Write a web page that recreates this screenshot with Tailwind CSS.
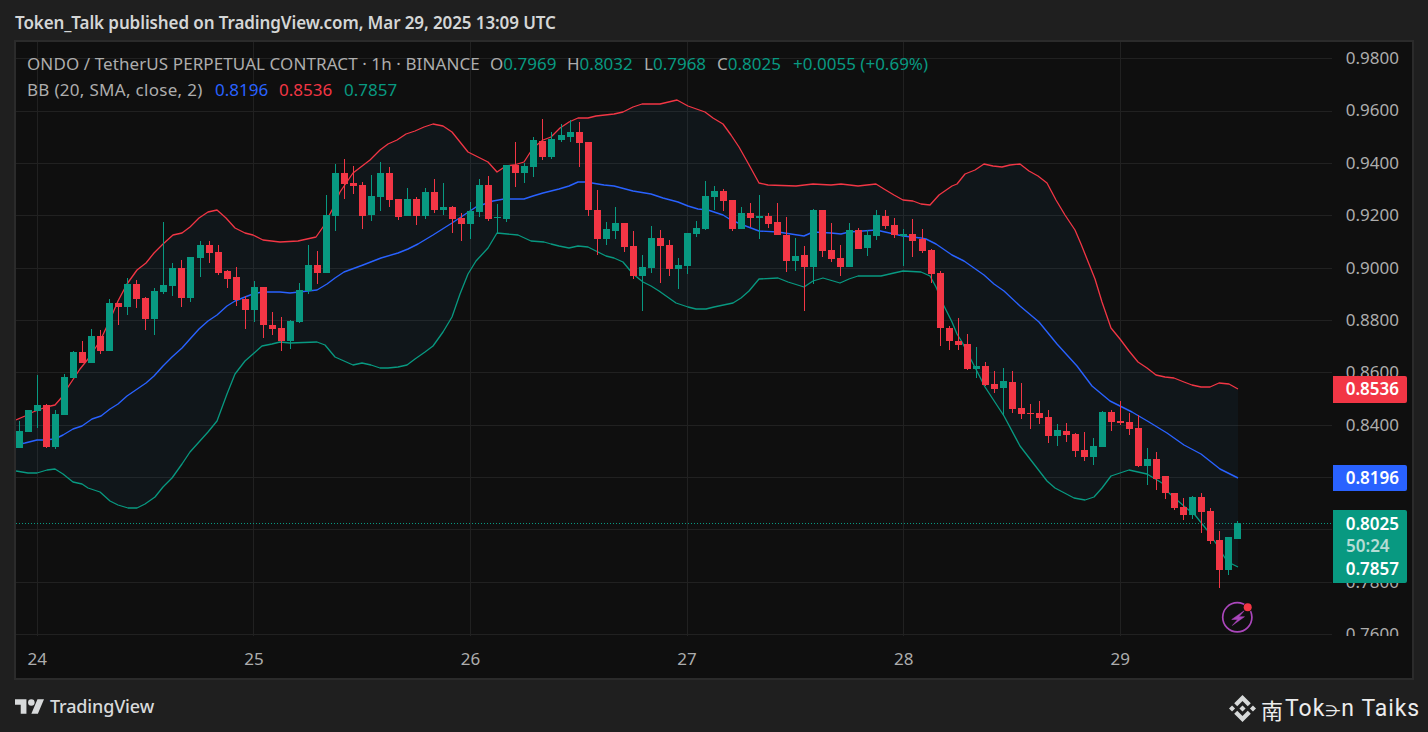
<!doctype html>
<html lang="en">
<head>
<meta charset="utf-8">
<title>ONDO / TetherUS chart</title>
<script src="https://cdn.jsdelivr.net/npm/@tailwindcss/browser@4"></script>
</head>
<body class="w-[1428px] h-[732px] overflow-hidden bg-[#1f1f1f] font-['Noto_Sans','DejaVu_Sans',sans-serif] text-[#adadad]">
  <header class="h-10 flex items-center pl-[15px] pt-[6px] text-[17px] font-semibold text-[#d4d6d6] tracking-[-0.1px]">Token_Talk published on TradingView.com, Mar 29, 2025 13:09 UTC</header>

  <main class="relative mx-[14px] w-[1400px] h-[640px] border-2 border-[#2b2b2b] bg-[#0f0f0f] flex flex-col">
    <div class="flex h-[594px]">
      <div class="relative w-[1316px] h-full">
        <svg id="chart" class="absolute inset-0" width="1316" height="594" viewBox="16 42 1316 594"></svg>
        <div class="absolute left-[11px] top-[9px] flex flex-col text-[17px] leading-[26px] whitespace-nowrap">
          <div class="flex">
            <span class="w-[463px] tracking-[0.09px]">ONDO / TetherUS PERPETUAL CONTRACT · 1h · BINANCE</span>
            <span class="w-[77px]">O<span class="text-[#089981]">0.7969</span></span>
            <span class="w-[77px]">H<span class="text-[#089981]">0.8032</span></span>
            <span class="w-[73px]">L<span class="text-[#089981]">0.7968</span></span>
            <span class="w-[76px]">C<span class="text-[#089981]">0.8025</span></span>
            <span class="text-[#089981]">+0.0055 (+0.69%)</span>
          </div>
          <div class="flex">
            <span class="w-[188px] tracking-[0.3px]">BB (20, SMA, close, 2)</span>
            <span class="w-[64px] text-[#2962ff]">0.8196</span>
            <span class="w-[65px] text-[#f23645]">0.8536</span>
            <span class="text-[#089981]">0.7857</span>
          </div>
        </div>
      </div>
      <div class="w-[80px] h-full overflow-hidden">
        <div class="-mt-[10px] pr-[13px] text-right text-[17px]">
          <div class="h-[52.38px] leading-[52.38px]">0.9800</div>
          <div class="h-[52.38px] leading-[52.38px]">0.9600</div>
          <div class="h-[52.38px] leading-[52.38px]">0.9400</div>
          <div class="h-[52.38px] leading-[52.38px]">0.9200</div>
          <div class="h-[52.38px] leading-[52.38px]">0.9000</div>
          <div class="h-[52.38px] leading-[52.38px]">0.8800</div>
          <div class="h-[52.38px] leading-[52.38px]">0.8600</div>
          <div class="h-[52.38px] leading-[52.38px]">0.8400</div>
          <div class="h-[52.38px] leading-[52.38px]">0.8200</div>
          <div class="h-[52.38px] leading-[52.38px]">0.8000</div>
          <div class="h-[52.38px] leading-[52.38px]">0.7800</div>
          <div class="h-[52.38px] leading-[52.38px]">0.7600</div>
        </div>
      </div>
    </div>
    <div class="flex -ml-[87px] h-[42px] items-center pt-[3px] text-[17px]">
      <div class="w-[216.6px] shrink-0 text-center">24</div>
      <div class="w-[216.6px] shrink-0 text-center">25</div>
      <div class="w-[216.6px] shrink-0 text-center">26</div>
      <div class="w-[216.6px] shrink-0 text-center">27</div>
      <div class="w-[216.6px] shrink-0 text-center">28</div>
      <div class="w-[216.6px] shrink-0 text-center">29</div>
    </div>

    <div class="absolute left-[1317px] top-[334px] w-[74px] h-[27px] rounded-r-[2px] bg-[#f23645] text-white text-[17px] font-semibold text-right pr-[8px] leading-[26px]">0.8536</div>
    <div class="absolute left-[1317px] top-[423px] w-[74px] h-[26px] rounded-r-[2px] bg-[#2962ff] text-white text-[17px] font-semibold text-right pr-[8px] leading-[26px]">0.8196</div>
    <div class="absolute left-[1317px] top-[468px] w-[74px] h-[73px] rounded-r-[2px] bg-[#089981] text-[17px] pr-[8px] flex flex-col">
      <span class="text-white font-semibold leading-[27px] text-right">0.8025</span>
      <span class="text-[#b4dcd4] font-semibold leading-[18px] pl-[13px]">50:24</span>
      <span class="text-white font-semibold leading-[27px] text-right">0.7857</span>
    </div>
  </main>

  <footer class="h-[52px] flex items-center justify-between pl-[15px] pr-[8px]">
    <div class="flex items-center gap-[6px]">
      <svg width="29" height="15" viewBox="0 4 35.5 18" fill="#d8dadb"><path d="M14 22H7V11H0V4h14v18zM28 22h-8l7.5-18h8L28 22z"/><circle cx="20" cy="8" r="4"/></svg>
      <span class="text-[18px] font-medium text-[#d8dadb] tracking-[-0.15px]">TradingView</span>
    </div>
    <div class="flex items-center gap-[5px] mt-[5px] text-[#ececec]">
      <svg width="27" height="27" viewBox="0 0 126.61 126.61" fill="#d6d8d8"><path d="M38.73 53.2l24.59-24.58 24.6 24.6 14.3-14.31L63.32 0 24.42 38.9zM0 63.31l14.3-14.31 14.31 14.31-14.31 14.3zM38.73 73.41l24.59 24.59 24.6-24.6 14.31 14.29-38.9 38.91-38.91-38.88-.02-.02zM98 63.31l14.3-14.3 14.31 14.3-14.31 14.31z"/><path d="M77.83 63.3L63.32 48.78 52.59 59.51l-1.24 1.23-2.54 2.54 14.51 14.5 14.51-14.47z"/></svg>
      <div class="flex items-baseline font-['Roboto','Noto_Sans_CJK_SC',sans-serif] text-[23px] leading-[30px] tracking-[0.9px] whitespace-nowrap">
        <span class="relative top-[3px] text-[22px] font-['Noto_Sans_CJK_SC',sans-serif] tracking-normal mr-[2px]">南</span>
        <span>Tok<span class="inline-block text-[15px] font-['DejaVu_Sans',sans-serif] tracking-normal mr-[1px]">⋺</span>n&nbsp;Taiks</span>
      </div>
    </div>
  </footer>

  <script>
    const NS = "http://www.w3.org/2000/svg", svg = document.getElementById("chart");
    function add(tag, attrs){ const e = document.createElementNS(NS, tag); for (const k in attrs) e.setAttribute(k, attrs[k]); svg.appendChild(e); return e; }
    const upper = [[16,420],[25,416],[33,412],[46,407],[55,405],[62,397],[68,387],[80,369],[88,359],[100,341],[109,322],[118,301],[127,284],[137,270],[146,263],[154,253],[163,244],[173,235],[182,233],[190,227],[199,218],[208,212],[217,210],[226,218],[235,228],[245,233],[253,235],[263,240],[280,242],[298,241],[316,237],[323,227],[332,210],[340,192],[353,173],[370,160],[380,150],[388,144],[397,140],[406,134],[415,131],[424,127],[433,124],[443,126],[452,132],[460,142],[468,152],[476,156],[488,162],[497,172],[506,166],[514,165],[524,162],[533,148],[543,140],[551,137],[560,128],[569,122],[578,118],[588,118],[596,116],[614,114],[623,112],[633,107],[642,104],[660,104],[677,100],[688,106],[705,112],[713,118],[723,124],[731,135],[739,147],[748,163],[759,183],[768,185],[796,186],[813,184],[831,185],[841,184],[858,186],[876,184],[884,189],[894,195],[903,200],[913,201],[921,204],[930,205],[939,195],[952,186],[957,184],[965,174],[975,170],[984,164],[993,166],[1002,167],[1010,165],[1020,164],[1029,171],[1038,176],[1047,183],[1056,200],[1065,215],[1075,230],[1081,244],[1089,264],[1095,279],[1102,302],[1111,328],[1120,339],[1129,351],[1138,362],[1147,368],[1156,375],[1165,377],[1174,378],[1184,382],[1192,385],[1201,387],[1210,387],[1219,383],[1229,384],[1238,389]];
    const basis = [[16,445],[25,443],[37,440],[43,440],[55,439],[63,435],[73,429],[82,426],[92,419],[101,416],[110,409],[118,404],[127,396],[146,383],[154,376],[163,366],[172,357],[182,348],[190,339],[199,329],[208,321],[217,315],[227,306],[235,301],[245,297],[253,294],[262,292],[280,292],[290,293],[317,290],[327,284],[335,278],[344,272],[363,265],[381,258],[398,253],[408,249],[418,244],[433,235],[452,223],[476,207],[493,201],[504,199],[524,199],[533,196],[543,193],[559,189],[569,186],[578,182],[586,182],[604,185],[614,186],[633,191],[651,194],[663,198],[678,202],[688,206],[698,209],[708,210],[723,215],[731,220],[743,225],[759,231],[778,232],[804,236],[813,232],[831,233],[841,234],[849,232],[876,230],[894,234],[903,236],[921,238],[926,239],[936,244],[952,255],[964,261],[974,268],[984,275],[994,284],[1004,291],[1020,306],[1039,322],[1057,344],[1077,366],[1092,386],[1110,401],[1132,412],[1149,422],[1167,433],[1184,445],[1201,454],[1220,469],[1238,478]];
    const lower = [[16,471],[28,473],[37,473],[47,470],[55,469],[63,474],[73,482],[82,484],[88,488],[100,492],[110,501],[118,505],[128,508],[137,508],[145,504],[155,497],[163,487],[172,478],[182,464],[190,452],[199,442],[208,432],[217,421],[227,394],[235,374],[245,361],[253,354],[262,346],[272,344],[280,342],[290,343],[317,342],[325,345],[335,357],[344,361],[353,365],[362,363],[371,365],[380,368],[388,368],[398,367],[407,365],[415,359],[425,352],[433,346],[443,332],[452,317],[460,294],[468,274],[476,261],[488,248],[497,233],[518,235],[531,241],[544,242],[551,244],[559,246],[569,248],[578,246],[588,247],[596,251],[606,256],[614,258],[623,262],[633,274],[643,282],[651,286],[659,291],[676,303],[688,307],[696,309],[706,309],[714,307],[733,303],[741,298],[749,291],[759,279],[778,278],[788,282],[804,287],[813,281],[823,278],[840,283],[849,279],[858,276],[881,276],[894,273],[903,271],[921,272],[930,276],[936,287],[943,304],[952,322],[957,334],[962,342],[985,387],[1004,416],[1020,446],[1047,481],[1055,488],[1074,498],[1085,500],[1094,497],[1102,488],[1111,476],[1129,470],[1147,474],[1162,483],[1169,493],[1185,507],[1195,515],[1207,530],[1217,545],[1225,558],[1230,563],[1238,567]];
    const c = "g431,448,421,448|g410,432,410,432|g405,411,375,428|r405,447,404,448|g414,447,410,449|g377,415,374,415|g352,378,351,378|r352,363,341,363|g336,363,329,363|r336,351,330,354|g303,351,299,351|r303,307,303,325|g284,307,278,315|r284,299,280,308|r298,319,297,330|g291,319,288,335|g285,292,222,294|g268,286,263,296|r268,298,260,307|g257,298,257,302|g245,258,241,277|r245,253,241,263|r252,273,245,275|r271,279,270,288|r277,300,267,306|r299,310,296,329|g287,310,281,322|r287,325,287,338|r325,329,312,335|r328,341,317,351|g321,341,320,349|g290,322,283,323|g265,291,245,294|r265,273,251,284|g215,273,195,273|g173,216,164,231|r173,184,159,199|r183,186,166,194|r185,216,182,229|g196,215,175,221|g173,197,162,211|r173,200,167,207|r199,217,199,220|g199,216,188,216|r199,216,197,225|g192,216,188,219|r192,210,179,213|g207,210,183,215|r207,219,206,233|r218,224,213,241|g211,224,202,239|g185,212,179,217|r185,219,176,221|g217,218,204,233|g165,219,165,222|r165,173,142,187|g166,173,163,183|g140,167,137,177|r141,157,119,160|g139,157,132,159|g135,140,124,142|g132,137,120,142|r132,143,122,167|r142,210,142,216|r210,239,190,255|g229,239,222,245|g223,231,207,239|r223,247,223,252|r246,276,231,279|g267,276,255,311|g238,268,226,273|r238,246,230,283|r245,269,240,276|g265,269,258,289|g233,266,233,274|g228,234,221,237|g196,229,181,230|g191,197,186,210|r191,201,189,211|r200,229,200,231|g213,229,207,229|r213,218,203,227|g216,218,195,239|r216,224,213,228|r222,235,203,235|r235,261,217,272|g256,261,238,271|r255,267,246,311|g210,267,209,284|r210,251,210,257|r250,259,223,262|r258,267,245,276|g230,267,223,267|r230,249,228,249|g235,248,230,256|g215,236,210,240|r216,226,210,229|r225,235,218,238|g234,236,229,266|r234,241,219,257|r239,251,229,253|r250,274,249,283|r273,328,271,346|r328,341,326,350|r341,345,318,350|r344,369,334,370|g366,369,347,378|r366,385,362,386|r384,389,371,393|g381,388,368,416|r382,409,371,413|r408,414,383,419|r413,414,404,429|r413,418,401,424|r417,436,410,443|g430,436,424,446|r431,435,423,442|r434,451,433,457|r450,457,432,461|g446,457,438,465|g412,447,411,447|r412,422,410,431|r421,423,401,425|r422,429,413,435|r428,466,415,467|g459,466,448,485|r459,479,452,490|r476,493,476,499|r493,508,493,510|r507,515,498,520|g497,515,496,519|r497,512,493,533|r511,541,508,544|r540,570,531,588|g537,570,537,575|g523,539,521,539".split("|");
    const GRID = "#212121", RED = "#f23645", GRN = "#089981", BLU = "#2962ff";
    [58,111,163,215,268,320,372,425,477,529,582,634].forEach(y => add("rect",{x:16,y:y,width:1316,height:1,fill:GRID}));
    for (let k=0;k<6;k++) add("rect",{x:Math.floor(37.3+216.6*k),y:42,width:1,height:594,fill:GRID});
    const pts = a => a.map(p=>p.join(",")).join(" ");
    add("polygon",{points:pts(upper)+" "+pts(lower.slice().reverse()),fill:"#2196f3","fill-opacity":"0.05"});
    add("polyline",{points:pts(upper),fill:"none",stroke:RED,"stroke-width":1.3,"stroke-linejoin":"round"});
    add("polyline",{points:pts(lower),fill:"none",stroke:GRN,"stroke-width":1.3,"stroke-linejoin":"round"});
    add("polyline",{points:pts(basis),fill:"none",stroke:BLU,"stroke-width":1.4,"stroke-linejoin":"round"});
    add("line",{x1:16,x2:1332,y1:523.5,y2:523.5,stroke:GRN,"stroke-width":1,"stroke-dasharray":"1 2"});
    c.forEach((s,i)=>{
      const col = s[0]==="g"?GRN:RED, [t,b,wt,wb] = s.slice(1).split(",").map(Number);
      const left = Math.round(16+9.025*i);
      add("rect",{x:left+3,y:Math.min(t,wt),width:1,height:Math.max(b,wb)-Math.min(t,wt),fill:col});
      add("rect",{x:left,y:t,width:7,height:Math.max(b-t,1),fill:col});
    });
    add("circle",{cx:1237.3,cy:617.3,r:14.6,fill:"none",stroke:"#ab47bc","stroke-width":1.7});
    add("path",{d:"M1244.5 610.5 L1231.7 619.5 L1237.7 619.5 L1232.3 625.5 L1244.5 616.7 L1239 616.7 Z",fill:"#ab47bc",stroke:"#ab47bc","stroke-width":0.5});
    add("circle",{cx:1247.7,cy:607.3,r:4,fill:RED,stroke:"#0f0f0f","stroke-width":1.5,"paint-order":"stroke"});
  </script>
</body>
</html>
